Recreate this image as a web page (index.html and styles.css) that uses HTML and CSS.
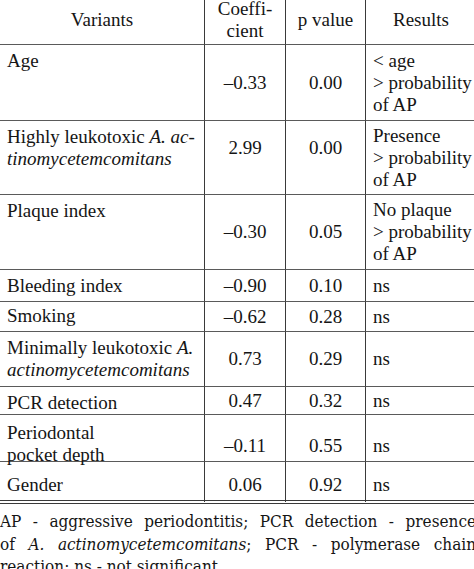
FILE: index.html
```html
<!DOCTYPE html>
<html>
<head>
<meta charset="utf-8">
<link rel="stylesheet" href="styles.css">
</head>
<body>
<div class="page">
  <div class="tbl">
    <div class="row r-head">
      <div class="cell head"><span class="t">Variants</span></div>
      <div class="cell head"><span class="t">Coeffi-<br>cient</span></div>
      <div class="cell head"><span class="t">p value</span></div>
      <div class="cell head res-h"><span class="t">Results</span></div>
    </div>
    <div class="row r-age">
      <div class="cell var"><span class="t">Age</span></div>
      <div class="cell num"><span class="t">–0.33</span></div>
      <div class="cell num"><span class="t">0.00</span></div>
      <div class="cell res"><span class="t">&lt; age<br>&gt; probability<br>of AP</span></div>
    </div>
    <div class="row r-high">
      <div class="cell var"><span class="t">Highly leukotoxic <i>A. ac-<br>tinomycetemcomitans</i></span></div>
      <div class="cell num up"><span class="t">2.99</span></div>
      <div class="cell num up"><span class="t">0.00</span></div>
      <div class="cell res"><span class="t">Presence<br>&gt; probability<br>of AP</span></div>
    </div>
    <div class="row r-plaque">
      <div class="cell var"><span class="t">Plaque index</span></div>
      <div class="cell num"><span class="t">–0.30</span></div>
      <div class="cell num"><span class="t">0.05</span></div>
      <div class="cell res"><span class="t">No plaque<br>&gt; probability<br>of AP</span></div>
    </div>
    <div class="row r-bleed">
      <div class="cell var"><span class="t">Bleeding index</span></div>
      <div class="cell num"><span class="t">–0.90</span></div>
      <div class="cell num"><span class="t">0.10</span></div>
      <div class="cell res"><span class="t">ns</span></div>
    </div>
    <div class="row r-smoke">
      <div class="cell var"><span class="t">Smoking</span></div>
      <div class="cell num"><span class="t">–0.62</span></div>
      <div class="cell num"><span class="t">0.28</span></div>
      <div class="cell res"><span class="t">ns</span></div>
    </div>
    <div class="row r-min">
      <div class="cell var"><span class="t">Minimally leukotoxic <i>A.</i><br><i>actinomycetemcomitans</i></span></div>
      <div class="cell num"><span class="t">0.73</span></div>
      <div class="cell num"><span class="t">0.29</span></div>
      <div class="cell res"><span class="t">ns</span></div>
    </div>
    <div class="row r-pcr">
      <div class="cell var"><span class="t">PCR detection</span></div>
      <div class="cell num"><span class="t">0.47</span></div>
      <div class="cell num"><span class="t">0.32</span></div>
      <div class="cell res"><span class="t">ns</span></div>
    </div>
    <div class="row r-perio">
      <div class="cell var"><span class="t">Periodontal<br>pocket depth</span></div>
      <div class="cell num down"><span class="t">–0.11</span></div>
      <div class="cell num down"><span class="t">0.55</span></div>
      <div class="cell res down"><span class="t">ns</span></div>
    </div>
    <div class="row r-gender">
      <div class="cell var"><span class="t">Gender</span></div>
      <div class="cell num"><span class="t">0.06</span></div>
      <div class="cell num"><span class="t">0.92</span></div>
      <div class="cell res"><span class="t">ns</span></div>
    </div>
  </div>
  <div class="note">
    <span class="ln just">AP - aggressive periodontitis; PCR detection - presence</span>
    <span class="ln just">of <i>A. actinomycetemcomitans</i>; PCR - polymerase chain</span>
    <span class="ln">reaction; ns - not significant.</span>
  </div>
</div>
</body>
</html>
```
FILE: styles.css
```css
html, body {
  margin: 0;
  padding: 0;
  background: #ffffff;
}
.page {
  width: 474px;
  height: 569px;
  overflow: hidden;
}
.tbl {
  width: 490px;
  font-family: "Liberation Serif", "Times New Roman", serif;
  font-size: 19px;
  line-height: 22px;
  color: #151515;
}
.row {
  display: grid;
  grid-template-columns: 204px 81px 80px 125px;
}
.cell {
  box-sizing: border-box;
  border-bottom: 1px solid #5a5a5a;
  border-left: 1px solid #3a3a3a;
  padding: 0 7px;
  display: flex;
  flex-direction: column;
  justify-content: center;
  white-space: nowrap;
}
.cell:first-child {
  border-left: none;
}
.t {
  display: block;
}
.head {
  text-align: center;
  align-items: center;
  padding-bottom: 4px;
}
.res-h {
  align-items: flex-start;
  padding-left: 27px;
}
.var {
  justify-content: flex-start;
  padding-top: 5px;
}
.num {
  text-align: center;
  align-items: center;
}
.res {
  text-align: left;
}
.up { padding-bottom: 20px; }
.down { padding-top: 16px; }
.r-head > .cell { height: 45px; }
.r-age > .cell { height: 76px; }
.r-high > .cell { height: 74px; }
.r-plaque > .cell { height: 75px; }
.r-bleed > .cell { height: 32px; }
.r-smoke > .cell { height: 30px; }
.r-min > .cell { height: 55px; }
.r-pcr > .cell { height: 28px; }
.r-perio > .cell { height: 47px; }
.r-gender > .cell {
  height: 42px;
  border-bottom: 4px double #3a3a3a;
  padding-top: 8px;
}
.r-smoke > .cell.var { padding-top: 3px; }
.r-perio > .cell.var { padding-top: 7px; }
.r-gender > .cell.var { padding-top: 12px; }
.note {
  font-family: "DejaVu Serif Condensed", "DejaVu Serif", serif;
  font-stretch: condensed;
  font-size: 17px;
  line-height: 22.5px;
  color: #151515;
  padding-top: 6px;
  width: 476px;
}
.ln {
  display: block;
  white-space: nowrap;
}
.ln.just {
  text-align: justify;
  text-align-last: justify;
}
```
